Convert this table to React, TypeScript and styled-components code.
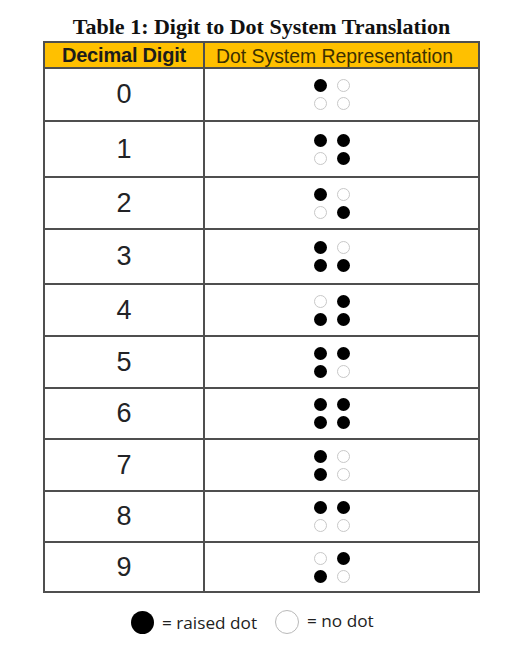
import React from 'react';
import styled, { createGlobalStyle } from 'styled-components';

const GlobalStyle = createGlobalStyle`
    html, body {
        margin: 0;
        padding: 0;
        background: #ffffff;
    }
`

const Page = styled.div`
    width: 529px;
    height: 666px;
    padding-top: 14px;
    box-sizing: border-box;
    background: #ffffff;
`

const Title = styled.div`
    width: 437px;
    margin-left: 43px;
    text-align: center;
    font-family: "Liberation Serif", "Times New Roman", serif;
    font-weight: bold;
    font-size: 22px;
    line-height: 25px;
    color: #111;
    margin-bottom: 2px;
`

const Table = styled.div`
    width: 437px;
    margin-left: 43px;
    border: 2px solid #4f4f4f;
    box-sizing: border-box;
`

const Row = styled.div<{ $height: number; $first?: boolean }>`
    display: grid;
    grid-template-columns: 160px 1fr;
    height: ${p => p.$height}px;
    box-sizing: border-box;
    border-top: ${p => (p.$first ? 'none' : '2px solid #4f4f4f')};
`

const HeaderRow = styled(Row)`
    background: #ffc000;
`

const Cell = styled.div`
    display: flex;
    align-items: center;
    justify-content: center;
    box-sizing: border-box;
    &:first-child {
        border-right: 2px solid #4f4f4f;
    }
`

const HeadDigit = styled(Cell)`
    font-family: "Liberation Sans", Arial, sans-serif;
    font-weight: bold;
    font-size: 20px;
    color: #1c1c1c;
    letter-spacing: -0.2px;
`

const HeadDots = styled(Cell)`
    font-family: "Liberation Sans", Arial, sans-serif;
    font-size: 19.4px;
    color: #3d3000;
    padding-right: 14px;
    padding-top: 2px;
`

const DigitCell = styled(Cell)`
    font-family: "Liberation Sans", Arial, sans-serif;
    font-size: 27px;
    color: #222326;
`

const DotCell = styled(Cell)`
    padding-right: 19px;
`

const DotGrid = styled.div`
    display: grid;
    grid-template-columns: 13px 13px;
    column-gap: 10px;
    row-gap: 5px;
`

const Dot = styled.div<{ $raised: boolean; $size?: number }>`
    width: ${p => p.$size ?? 13}px;
    height: ${p => p.$size ?? 13}px;
    border-radius: 50%;
    box-sizing: border-box;
    background: ${p => (p.$raised ? '#000' : '#fff')};
    border: ${p => (p.$raised ? 'none' : '1.6px solid #c8c8c8')};
`

const Legend = styled.div`
    display: flex;
    align-items: center;
    margin-top: 17px;
    padding-left: 131px;
    font-family: "Open Sans", "Noto Sans", sans-serif;
    font-size: 17.2px;
    color: #222;
`

const LegendDot = styled(Dot)`
    border-color: #b9b9b9;
`

const LegendLabel = styled.span<{ $lift?: number }>`
    margin-left: 8px;
    margin-right: 18px;
    position: relative;
    top: ${p => -(p.$lift ?? 0)}px;
`

const rows: { digit: string; dots: number[]; height: number }[] = [
    { digit: '0', dots: [1, 0, 0, 0], height: 53 },
    { digit: '1', dots: [1, 1, 0, 1], height: 56 },
    { digit: '2', dots: [1, 0, 0, 1], height: 52 },
    { digit: '3', dots: [1, 0, 1, 1], height: 55 },
    { digit: '4', dots: [0, 1, 1, 1], height: 52 },
    { digit: '5', dots: [1, 1, 1, 0], height: 52 },
    { digit: '6', dots: [1, 1, 1, 1], height: 51 },
    { digit: '7', dots: [1, 0, 1, 0], height: 52 },
    { digit: '8', dots: [1, 1, 0, 0], height: 51 },
    { digit: '9', dots: [0, 1, 1, 0], height: 50 },
]

const App = () => {
    return (
        <Page>
            <GlobalStyle />
            <Title>Table 1: Digit to Dot System Translation</Title>
            <Table>
                <HeaderRow $height={24} $first>
                    <HeadDigit>Decimal Digit</HeadDigit>
                    <HeadDots>Dot System Representation</HeadDots>
                </HeaderRow>
                {rows.map(row => (
                    <Row key={row.digit} $height={row.height}>
                        <DigitCell>{row.digit}</DigitCell>
                        <DotCell>
                            <DotGrid>
                                {row.dots.map((d, i) => <Dot key={i} $raised={d === 1} />)}
                            </DotGrid>
                        </DotCell>
                    </Row>
                ))}
            </Table>
            <Legend>
                <LegendDot $raised $size={23} />
                <LegendLabel>= raised dot</LegendLabel>
                <LegendDot $raised={false} $size={24} />
                <LegendLabel $lift={2}>= no dot</LegendLabel>
            </Legend>
        </Page>
    )
}

export default App
